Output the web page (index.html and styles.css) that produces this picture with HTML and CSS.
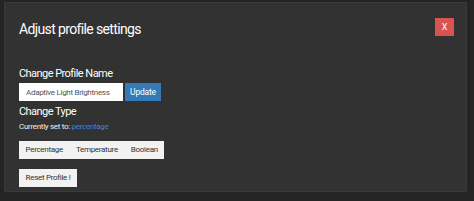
FILE: index.html
```html
<!DOCTYPE html>
<html lang="en">

<head>
    <meta charset="UTF-8">
    <meta name="viewport" content="width=device-width, initial-scale=1.0">
    <title>Adjust profile settings</title>
    <link rel="stylesheet" href="styles.css">
</head>

<body>
    <div class="modal">
        <div class="modal-header">
            <h2>Adjust profile settings</h2>
            <button class="close-btn">X</button>
        </div>
        <div class="modal-body">
            <h3>Change Profile Name</h3>
            <div class="name-row">
                <input type="text" value="Adaptive Light Brightness">
                <button class="update-btn">Update</button>
            </div>
            <h3>Change Type</h3>
            <p class="current">Currently set to: <a href="#">percentage</a></p>
            <div class="type-group">
                <button>Percentage</button>
                <button>Temperature</button>
                <button>Boolean</button>
            </div>
            <button class="reset-btn">Reset Profile !</button>
        </div>
    </div>
</body>
</html>
```

FILE: styles.css
```css
body {
    margin: 0;
    padding: 2px 7px 9px 4px;
    background-color: #242424;
    font-family: Roboto, "Liberation Sans", sans-serif;
    color: #ffffff;
}

.modal {
    background-color: #323232;
    border: 1px solid #3a3a3a;
    height: 190px;
    box-sizing: border-box;
    padding: 0 12px 0 14px;
}

.modal-header {
    display: flex;
    justify-content: space-between;
    align-items: flex-start;
    padding-top: 15px;
}

.modal-header h2 {
    margin: 3px 0 0;
    font-size: 14px;
    line-height: 17px;
    font-weight: 400;
    letter-spacing: -0.045em;
}

.close-btn {
    width: 19px;
    height: 18px;
    padding: 0;
    border: none;
    background-color: #d9534f;
    color: #ffffff;
    font-family: inherit;
    font-size: 9px;
}

.modal-body {
    padding-top: 29px;
}

.modal-body h3 {
    margin: 0 0 3px;
    font-size: 11px;
    line-height: 13px;
    font-weight: 400;
    letter-spacing: -0.05em;
}

.name-row {
    display: flex;
    gap: 2px;
    margin-bottom: 4px;
}

.name-row input {
    width: 104px;
    height: 18px;
    box-sizing: border-box;
    border: none;
    padding: 0 0 0 7px;
    font-family: inherit;
    letter-spacing: -0.3px;
    font-size: 8px;
    color: #555555;
}

.update-btn {
    width: 36px;
    height: 18px;
    padding: 0;
    border: none;
    background-color: #337ab7;
    color: #ffffff;
    font-family: inherit;
    letter-spacing: -0.2px;
    font-size: 8.5px;
}

.current {
    margin: 4px 0 5px;
    font-size: 8px;
    line-height: 10px;
    letter-spacing: -0.3px;
    color: #f0f0f0;
}

.current a {
    color: #3f86cf;
    text-decoration: none;
}

.type-group {
    display: inline-flex;
    background-color: #f2f2f2;
    height: 18px;
    margin-bottom: 10px;
}

.type-group button,
.reset-btn {
    border: none;
    background-color: #f2f2f2;
    color: #333333;
    font-family: inherit;
    letter-spacing: -0.3px;
    font-size: 8px;
    padding: 0 6.5px;
}

.reset-btn {
    display: block;
    height: 18px;
    width: 58px;
    padding: 0;
}
```
